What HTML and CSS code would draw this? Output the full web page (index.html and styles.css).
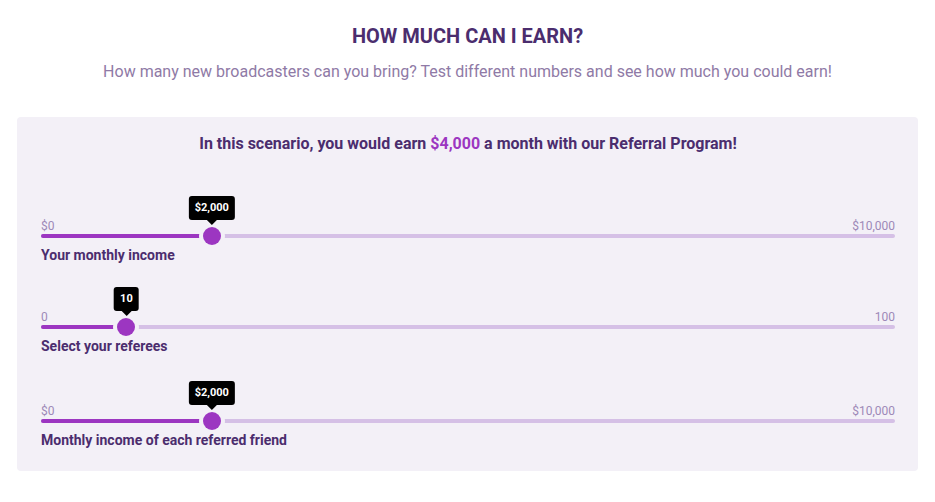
FILE: index.html
```html
<!DOCTYPE html>
<html lang="en">
<head>
<meta charset="utf-8">
<title>Referral calculator</title>
<link rel="stylesheet" href="styles.css">
</head>
<body>
<section class="earn">
  <h1 class="earn-title">HOW MUCH CAN I EARN?</h1>
  <p class="earn-sub">How many new broadcasters can you bring? Test different numbers and see how much you could earn!</p>
  <div class="card">
    <p class="card-head">In this scenario, you would earn <span class="amount">$4,000</span> a month with our Referral Program!</p>

    <div class="slider">
      <div class="range-labels"><span>$0</span><span>$10,000</span></div>
      <div class="track">
        <div class="fill" style="width:20%"></div>
        <div class="thumb" style="left:20%"><div class="tip">$2,000</div></div>
      </div>
      <div class="slider-name">Your monthly income</div>
    </div>

    <div class="slider">
      <div class="range-labels"><span>0</span><span>100</span></div>
      <div class="track">
        <div class="fill" style="width:10%"></div>
        <div class="thumb" style="left:10%"><div class="tip">10</div></div>
      </div>
      <div class="slider-name">Select your referees</div>
    </div>

    <div class="slider slider-last">
      <div class="range-labels"><span>$0</span><span>$10,000</span></div>
      <div class="track">
        <div class="fill" style="width:20%"></div>
        <div class="thumb" style="left:20%"><div class="tip">$2,000</div></div>
      </div>
      <div class="slider-name">Monthly income of each referred friend</div>
    </div>
  </div>
</section>
</body>
</html>
```
FILE: styles.css
```css
* { box-sizing: border-box; }
html, body { margin: 0; padding: 0; background: #ffffff; }
body { font-family: Roboto, "Liberation Sans", Arial, sans-serif; }

.earn { padding: 24px 17px 0; }

.earn-title {
  margin: 0;
  text-align: center;
  font-size: 20px;
  line-height: 24px;
  font-weight: 700;
  color: #4b2d6e;
}

.earn-sub {
  margin: 12px 0 0;
  text-align: center;
  font-size: 16px;
  line-height: 24px;
  color: #8f7aa6;
}

.card {
  margin-top: 33px;
  background: #f3f0f7;
  border-radius: 4px;
  padding: 15px 23px 21px 24px;
  height: 354px;
}

.card-head {
  margin: 0;
  text-align: center;
  font-size: 16px;
  line-height: 24px;
  font-weight: 700;
  color: #4b2d6e;
}
.amount { color: #9c36c1; }

.slider { margin-top: 63px; }
.slider + .slider { margin-top: 45px; }
.slider + .slider.slider-last { margin-top: 48px; }

.range-labels {
  display: flex;
  justify-content: space-between;
  font-size: 12px;
  line-height: 14px;
  color: #9d89b7;
}

.track {
  position: relative;
  height: 4px;
  margin-top: 1px;
  border-radius: 2px;
  background: #d5c0e6;
}
.fill {
  height: 4px;
  border-radius: 2px;
  background: #9c36c1;
}
.thumb {
  position: absolute;
  top: 50%;
  width: 18px;
  height: 18px;
  border-radius: 50%;
  background: #9c36c1;
  box-shadow: 0 0 0 4px #f3f0f7;
  transform: translate(-50%, -50%);
}
.tip {
  position: absolute;
  left: 50%;
  bottom: calc(100% + 7px);
  transform: translateX(-50%);
  background: #000000;
  color: #ffffff;
  font-size: 11px;
  font-weight: 700;
  line-height: 24px;
  height: 24px;
  padding: 0 6px;
  border-radius: 3px;
  white-space: nowrap;
}
.tip::after {
  content: "";
  position: absolute;
  left: 50%;
  top: 100%;
  margin-left: -5px;
  border-left: 5px solid transparent;
  border-right: 5px solid transparent;
  border-top: 5px solid #000000;
}

.slider-name {
  margin-top: 7px;
  font-size: 14px;
  line-height: 20px;
  font-weight: 700;
  color: #4b2d6e;
}
```
